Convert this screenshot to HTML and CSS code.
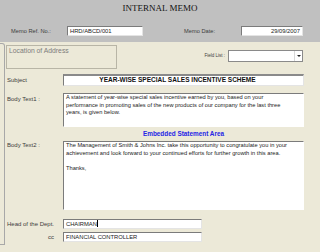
FILE: index.html
```html
<!DOCTYPE html>
<html>
<head>
<meta charset="utf-8">
<title>Internal Memo</title>
<link rel="stylesheet" href="styles.css">
</head>
<body>
<div class="header">
  <div class="title">INTERNAL MEMO</div>
  <div class="meta">
    <span class="lbl ref-lbl">Memo Ref. No.:</span>
    <div class="field ref-field">HRD/ABCD/001</div>
    <span class="lbl date-lbl">Memo Date:</span>
    <div class="field date-field">29/09/2007</div>
  </div>
</div>
<div class="main">
  <div class="side"></div>
  <div class="form">
    <div class="top-row">
      <div class="address">Location of Address</div>
      <div class="fieldlist">
        <span class="lbl fl-lbl">Field List :</span>
        <div class="select"><span class="drop"><span class="arrow"></span></span></div>
      </div>
    </div>
    <div class="row subject-row">
      <span class="lbl row-lbl">Subject</span>
      <div class="field subject">YEAR-WISE SPECIAL SALES INCENTIVE SCHEME</div>
    </div>
    <div class="row body1-row">
      <span class="lbl row-lbl">Body Text1 :</span>
      <div class="textbox body1">A statement of year-wise special sales incentive earned by you, based on your<br>performance in promoting sales of the new products of our company for the last three<br>years, is given below.</div>
    </div>
    <div class="band">Embedded Statement Area</div>
    <div class="row body2-row">
      <span class="lbl row-lbl">Body Text2 :</span>
      <div class="textbox body2">The Management of Smith &amp; Johns Inc. take this opportunity to congratulate you in your<br>achievement and look forward to your continued efforts for further growth in this area.<br><br>Thanks,</div>
    </div>
    <div class="row head-row">
      <span class="lbl row-lbl">Head of the Dept.</span>
      <div class="field small">CHAIRMAN<span class="caret"></span></div>
    </div>
    <div class="row cc-row">
      <span class="lbl row-lbl cc-lbl">cc</span>
      <div class="field small">FINANCIAL CONTROLLER</div>
    </div>
  </div>
</div>
</body>
</html>
```

FILE: styles.css
```css
* { box-sizing: border-box; }
html, body {
  margin: 0;
  padding: 0;
}
body {
  width: 320px;
  height: 252px;
  overflow: hidden;
  background: #ece9d8;
  font-family: "Liberation Sans", Arial, sans-serif;
  font-size: 6px;
  color: #3c3c3c;
}
.header {
  height: 42px;
  background: #c0c0c0;
  padding-top: 4px;
}
.title {
  text-align: center;
  font-family: "Liberation Serif", "Times New Roman", serif;
  font-size: 9px;
  line-height: 9px;
  color: #111;
}
.meta {
  display: flex;
  align-items: center;
  height: 10px;
  margin-top: 13px;
  padding-left: 11px;
}
.lbl {
  line-height: 8px;
  white-space: nowrap;
}
.field {
  height: 10px;
  background: #fff;
  border: 1px solid;
  border-color: #7b7b7b #e4e4e4 #e4e4e4 #7b7b7b;
  line-height: 8px;
  padding: 0 2px;
  color: #222;
  white-space: nowrap;
  font-size: 5.8px;
}
.ref-lbl { width: 56px; font-size: 5.7px; }
.ref-field { width: 76px; }
.date-lbl { width: 57px; margin-left: 41px; font-size: 5.7px; }
.date-field { width: 62px; text-align: right; }

.main {
  display: flex;
  height: 210px;
}
.side {
  width: 5px;
  height: 202px;
  margin-top: 1px;
  border-top: 1px solid #a8a8a8;
  border-right: 1px solid #a8a8a8;
  border-bottom: 1px solid #a8a8a8;
  border-top-right-radius: 3px;
  flex: none;
}
.form {
  flex: 1;
}
.top-row {
  display: flex;
  margin-top: 3px;
  height: 24px;
}
.address {
  margin-left: 1px;
  width: 111px;
  height: 24px;
  border: 1px solid #b8b5a6;
  color: #7c7c7c;
  font-size: 6.8px;
  padding: 1px 2px;
  line-height: 8px;
  flex: none;
}
.fieldlist {
  display: flex;
  align-items: center;
  margin-left: auto;
  margin-right: 17px;
  margin-top: 5px;
  height: 12px;
}
.fl-lbl {
  font-size: 4.5px;
  margin-right: 3px;
}
.select {
  flex: none;
  width: 75px;
  height: 12px;
  background: #fff;
  border: 1px solid #8a8a8a;
  display: flex;
  justify-content: flex-end;
}
.drop {
  width: 8px;
  height: 10px;
  border-left: 1px solid #d8d8d8;
  display: flex;
  align-items: center;
  justify-content: center;
}
.arrow {
  width: 0;
  height: 0;
  border-left: 2px solid transparent;
  border-right: 2px solid transparent;
  border-top: 2px solid #222;
}
.row {
  display: flex;
  align-items: flex-start;
}
.row-lbl {
  width: 58px;
  padding-left: 2px;
  flex: none;
}
.subject-row { margin-top: 5px; }
.subject-row .row-lbl { padding-top: 2px; }
.subject {
  width: 241px;
  height: 12px;
  border-top: 2px solid #8a8a8a;
  text-align: center;
  font-weight: bold;
  font-size: 6.5px;
  color: #111;
  padding-left: 0;
  padding-right: 12px;
}
.textbox {
  width: 241px;
  background: #fff;
  border: 1px solid;
  border-color: #7b7b7b #fff #fff #7b7b7b;
  font-size: 5.7px;
  line-height: 7.5px;
  padding: 0 2px;
  color: #222;
  white-space: nowrap;
  overflow: hidden;
}
.body1-row { margin-top: 7px; }
.body1-row .row-lbl { padding-top: 2px; }
.body1 { height: 34px; }
.band {
  height: 14px;
  margin-left: 58px;
  width: 241px;
  text-align: center;
  line-height: 14px;
  font-weight: bold;
  font-size: 6.4px;
  color: #2424e6;
}
.body2 { height: 69px; }
.head-row { margin-top: 9px; align-items: center; }
.cc-row { margin-top: 3px; align-items: center; }
.small { width: 139px; }
.cc-lbl {
  text-align: right;
  padding-right: 9px;
}
.caret {
  display: inline-block;
  width: 1px;
  height: 7px;
  background: #000;
  vertical-align: -1px;
}
```
